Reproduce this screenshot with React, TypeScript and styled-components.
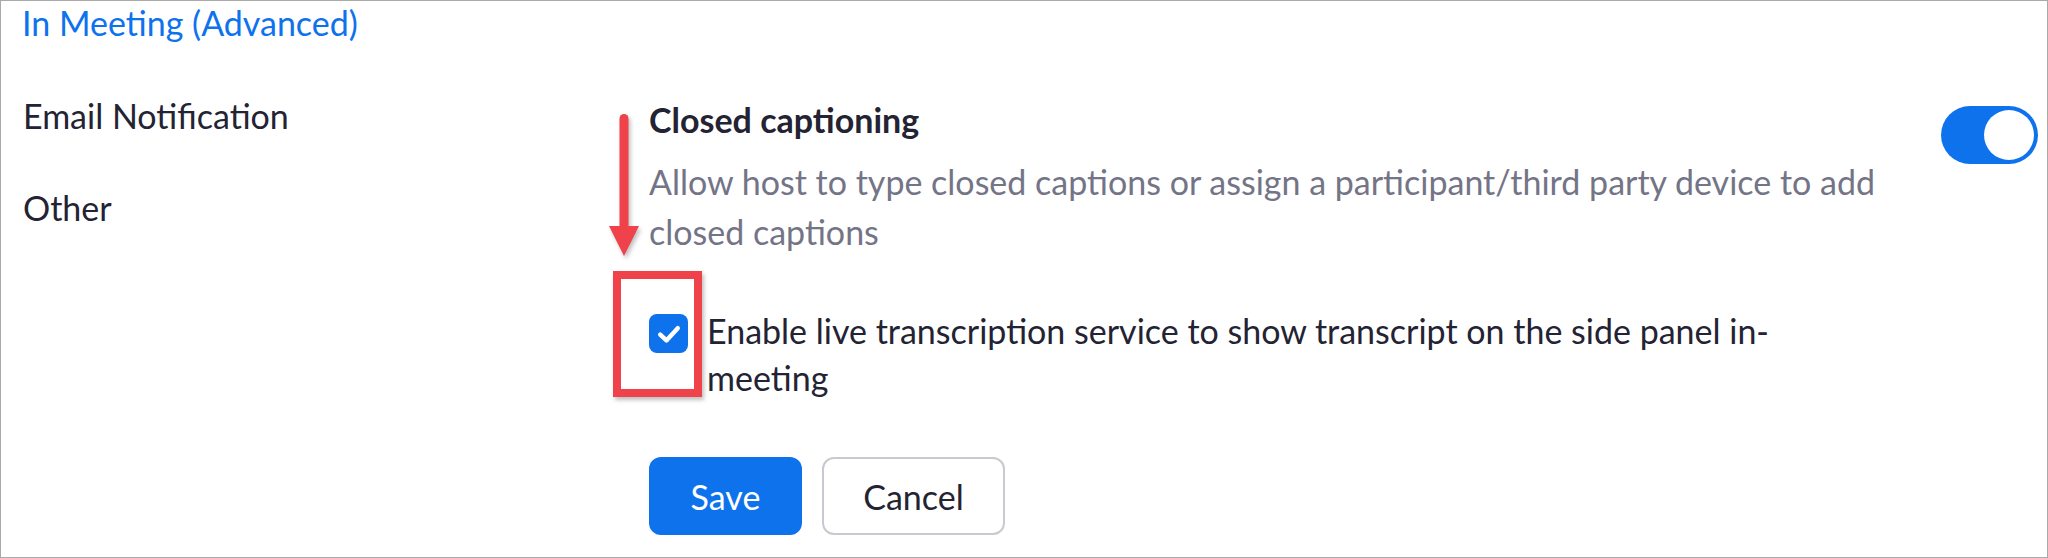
import React from 'react'
import styled, { createGlobalStyle } from 'styled-components'

const GlobalStyle = createGlobalStyle`
  html, body {
    margin: 0;
    padding: 0;
    background: #ffffff;
  }
  body {
    font-family: Lato, 'Open Sans', 'Liberation Sans', sans-serif;
    color: #232333;
  }
`

const BLUE = '#0e72ed'
const RED = '#f0424a'

const Frame = styled.div`
  width: 2048px;
  height: 558px;
  box-sizing: border-box;
  border: 1px solid #a9a9a9;
  background: #ffffff;
  overflow: hidden;
`
const Heading = styled.div`
  padding: 4px 0 0 21px;
  font-size: 34px;
  line-height: 36px;
  color: ${BLUE};
`
const Body = styled.div`
  display: flex;
`
const Nav = styled.div`
  width: 626px;
  padding: 57px 0 0 22px;
  display: flex;
  flex-direction: column;
  gap: 56px;
`
const NavItem = styled.div`
  font-size: 34px;
  line-height: 36px;
  color: #232333;
`
const Content = styled.div`
  flex: 1;
  padding: 61px 9px 0 0;
  display: flex;
  align-items: flex-start;
`
const TextCol = styled.div`
  flex: 0 1 1250px;
`
const Title = styled.div`
  font-size: 34px;
  line-height: 36px;
  font-weight: 700;
  color: #232333;
`
const Description = styled.div`
  margin-top: 19px;
  font-size: 34px;
  line-height: 50px;
  color: #747487;
`
const CheckRow = styled.div`
  margin-top: 50px;
  display: flex;
  align-items: flex-start;
`
const CheckWrap = styled.div`
  position: relative;
  margin-top: 7px;
  margin-right: 19px;
  flex-shrink: 0;
`
const CheckBox = styled.div`
  width: 39px;
  height: 39px;
  border-radius: 8px;
  background: ${BLUE};
  display: flex;
  align-items: center;
  justify-content: center;
`
const Highlight = styled.div`
  position: absolute;
  left: -36px;
  top: -43px;
  width: 89px;
  height: 126px;
  box-sizing: border-box;
  border: 8px solid ${RED};
  box-shadow: 2px 3px 4px rgba(0, 0, 0, 0.25);
  pointer-events: none;
`
const Arrow = styled.svg`
  position: absolute;
  left: -40px;
  top: -200px;
  overflow: visible;
  filter: drop-shadow(2px 3px 2px rgba(0, 0, 0, 0.25));
`
const CheckLabel = styled.div`
  max-width: 1100px;
  font-size: 34px;
  line-height: 47px;
  color: #232333;
`
const Buttons = styled.div`
  margin-top: 56px;
  display: flex;
  gap: 20px;
`
const Button = styled.button<{ $primary?: boolean }>`
  height: 78px;
  width: ${(p) => (p.$primary ? '153px' : '183px')};
  box-sizing: border-box;
  border-radius: 12px;
  font-family: Lato, 'Open Sans', sans-serif;
  font-size: 34px;
  border: ${(p) => (p.$primary ? 'none' : '2px solid #c9c9cf')};
  background: ${(p) => (p.$primary ? BLUE : '#ffffff')};
  color: ${(p) => (p.$primary ? '#ffffff' : '#232333')};
  padding: 0;
  cursor: pointer;
`
const Toggle = styled.div`
  margin-top: 4px;
  margin-left: auto;
  width: 97px;
  height: 58px;
  border-radius: 29px;
  background: ${BLUE};
  display: flex;
  align-items: center;
  justify-content: flex-end;
  padding-right: 4px;
  box-sizing: border-box;
  flex-shrink: 0;
`
const Knob = styled.div`
  width: 50px;
  height: 50px;
  border-radius: 50%;
  background: #ffffff;
`

const App = () => {
  return (
    <Frame>
      <GlobalStyle />
      <Heading>In Meeting (Advanced)</Heading>
      <Body>
        <Nav>
          <NavItem>Email Notification</NavItem>
          <NavItem>Other</NavItem>
        </Nav>
        <Content>
          <TextCol>
            <Title>Closed captioning</Title>
            <Description>
              Allow host to type closed captions or assign a participant/third party device to add
              closed captions
            </Description>
            <CheckRow>
              <CheckWrap>
                <Arrow width="30" height="142" viewBox="0 0 30 142">
                  <rect x="10.5" y="0" width="9" height="118" rx="4.5" fill={RED} />
                  <polygon points="0,112 30,112 15,142" fill={RED} />
                </Arrow>
                <CheckBox>
                  <svg width="28" height="28" viewBox="0 0 24 24">
                    <polyline
                      points="4.5,12.5 9.8,17.5 19.5,7"
                      fill="none"
                      stroke="#ffffff"
                      strokeWidth="3.8"
                      strokeLinecap="round"
                      strokeLinejoin="round"
                    />
                  </svg>
                </CheckBox>
                <Highlight />
              </CheckWrap>
              <CheckLabel>
                Enable live transcription service to show transcript on the side panel in-meeting
              </CheckLabel>
            </CheckRow>
            <Buttons>
              <Button $primary>Save</Button>
              <Button>Cancel</Button>
            </Buttons>
          </TextCol>
          <Toggle>
            <Knob />
          </Toggle>
        </Content>
      </Body>
    </Frame>
  )
}

export default App
